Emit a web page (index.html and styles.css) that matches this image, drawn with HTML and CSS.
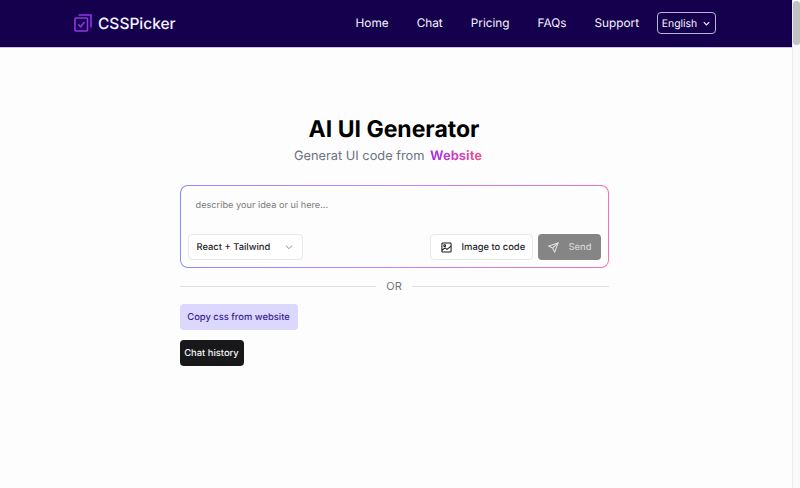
FILE: index.html
```html
<!DOCTYPE html>
<html>
  <head>
    <title>CSSPicker</title>
    <link rel="stylesheet" href="styles.css">
  </head>
  <body>
    <div class="page">
      <header class="navbar">
        <a class="logo">
          <svg class="logo-icon" viewBox="0 0 18 18" fill="none" xmlns="http://www.w3.org/2000/svg">
            <path d="M4.5 1H17V13.5" />
            <rect x="1" y="4" width="12.5" height="13" rx="1" />
            <path d="M4.2 10.2L6.6 12.8L10.6 8" />
          </svg>
          <span>CSSPicker</span>
        </a>
        <nav class="nav-links">
          <a>Home</a>
          <a>Chat</a>
          <a>Pricing</a>
          <a>FAQs</a>
          <a>Support</a>
        </nav>
        <button class="lang-button">
          English
          <svg class="lang-chevron" viewBox="0 0 10 10" fill="none" xmlns="http://www.w3.org/2000/svg">
            <path d="M2 3.5L5 6.5L8 3.5" />
          </svg>
        </button>
      </header>

      <main class="content">
        <h1>AI UI Generator</h1>
        <p class="subtitle">Generat UI code from <span class="gradient-text">Website</span></p>

        <div class="prompt-border">
          <div class="prompt-box">
            <div class="placeholder">describe your idea or ui here...</div>
            <div class="prompt-actions">
              <div class="select">
                <span>React + Tailwind</span>
                <svg class="select-chevron" viewBox="0 0 12 12" fill="none" xmlns="http://www.w3.org/2000/svg">
                  <path d="M2.5 4.5L6 8L9.5 4.5" />
                </svg>
              </div>
              <div class="action-group">
                <button class="image-button">
                  <svg class="button-icon" viewBox="0 0 12 12" fill="none" xmlns="http://www.w3.org/2000/svg">
                    <rect x="1" y="1" width="10" height="10" rx="1" />
                    <circle cx="4" cy="4" r="1" />
                    <path d="M1 9L4.5 6.5L6.5 8L11 4.5" />
                  </svg>
                  Image to code
                </button>
                <button class="send-button">
                  <svg class="button-icon" viewBox="0 0 12 12" fill="none" xmlns="http://www.w3.org/2000/svg">
                    <path d="M11 1L0.8 4.4L5 6.6L7.4 11L11 1Z" />
                    <path d="M11 1L5 6.6" />
                  </svg>
                  Send
                </button>
              </div>
            </div>
          </div>
        </div>

        <div class="divider">
          <span class="divider-line"></span>
          <span>OR</span>
          <span class="divider-line"></span>
        </div>

        <div class="extra-links">
          <button class="copy-button">Copy css from website</button>
          <button class="history-button">Chat history</button>
        </div>
      </main>
    </div>
    <div class="scrollbar"><div class="scrollbar-thumb"></div></div>
  </body>
</html>
```

FILE: styles.css
```css
html,
body {
  height: 100%;
  overflow: hidden;
}
body {
  margin: 0;
  display: flex;
  font-family: Inter, "Noto Sans", sans-serif;
  text-rendering: geometricPrecision;
  background-color: #fdfdfd;
  color: #000000;
}
button {
  font-family: inherit;
  text-rendering: geometricPrecision;
  cursor: pointer;
  white-space: nowrap;
}
.page {
  flex: 1;
  min-width: 0;
}
.scrollbar {
  width: 8px;
  background-color: #fafafa;
  border-left: 1px solid #ececec;
  box-sizing: border-box;
}
.scrollbar-thumb {
  height: 44px;
  margin: 1px 0 0 0;
  border-radius: 4px;
  background-color: #c2c2c2;
}
.navbar {
  height: 48px;
  box-sizing: border-box;
  display: flex;
  align-items: center;
  padding: 0 76px 1px 74px;
  background-color: #15004d;
  border-bottom: 1px solid #c9c3e6;
  color: #f5f3ff;
}
.logo {
  display: flex;
  align-items: center;
  gap: 6px;
  font-size: 15.5px;
  font-weight: 500;
}
.logo-icon {
  width: 18px;
  height: 18px;
  stroke: #9333ea;
  stroke-width: 1.6;
}
.nav-links {
  display: flex;
  gap: 28px;
  margin-left: auto;
  font-size: 11.8px;
}
.lang-button {
  display: flex;
  align-items: center;
  justify-content: center;
  gap: 5px;
  width: 59px;
  height: 22px;
  margin-left: 18px;
  padding: 0;
  font-size: 10.4px;
  color: #f5f3ff;
  background: none;
  border: 1px solid #b9b3d6;
  border-radius: 4px;
}
.lang-chevron {
  width: 9px;
  height: 9px;
  stroke: #f5f3ff;
  stroke-width: 1.3;
}
.content {
  width: 429px;
  margin: 0 auto;
  padding-top: 67px;
  transform: translateX(-2px);
}
h1 {
  margin: 0;
  font-size: 23px;
  font-weight: 700;
  line-height: 29px;
  text-align: center;
}
.subtitle {
  margin: 1px 0 0;
  padding-right: 12px;
  font-size: 12.8px;
  line-height: 22px;
  text-align: center;
  color: #6b7280;
}
.gradient-text {
  margin-left: 2px;
  font-size: 13px;
  font-weight: 700;
  background: linear-gradient(90deg, #a32fe6, #f0528f);
  -webkit-background-clip: text;
  background-clip: text;
  color: transparent;
}
.prompt-border {
  margin-top: 17px;
  padding: 1px;
  border-radius: 8px;
  background: linear-gradient(90deg, #8b8cf8, #c084fc 50%, #f472b6);
}
.prompt-box {
  height: 81px;
  padding: 13px 7px 7px;
  display: flex;
  flex-direction: column;
  justify-content: space-between;
  box-sizing: border-box;
  border-radius: 7px;
  background-color: #fdfdfd;
}
.placeholder {
  padding-left: 8px;
  font-size: 9.2px;
  line-height: 14px;
  color: #7b7b7b;
}
.prompt-actions {
  display: flex;
  align-items: center;
  justify-content: space-between;
}
.select {
  width: 115px;
  height: 26px;
  padding: 0 8px;
  display: flex;
  align-items: center;
  justify-content: space-between;
  box-sizing: border-box;
  font-size: 9.4px;
  font-weight: 500;
  color: #27272a;
  background-color: #ffffff;
  border: 1px solid #e8e8ea;
  border-radius: 4px;
}
.select-chevron {
  width: 10px;
  height: 10px;
  stroke: #71717a;
  stroke-width: 1;
}
.action-group {
  display: flex;
  gap: 5px;
}
.image-button,
.send-button {
  height: 26px;
  display: flex;
  align-items: center;
  box-sizing: border-box;
  font-size: 9.4px;
  font-weight: 500;
  border-radius: 4px;
}
.image-button {
  width: 103px;
  gap: 10px;
  padding: 0 10px;
  color: #27272a;
  background-color: #ffffff;
  border: 1px solid #e8e8ea;
}
.send-button {
  width: 63px;
  gap: 10px;
  padding: 0 10px;
  color: #d4d4d4;
  background-color: #858585;
  border: none;
}
.button-icon {
  width: 11px;
  height: 11px;
  flex-shrink: 0;
  stroke: #18181b;
  stroke-width: 1.1;
}
.send-button .button-icon {
  stroke: #e5e5e5;
}
.divider {
  margin-top: 11px;
  display: flex;
  align-items: center;
  gap: 10px;
  font-size: 11px;
  line-height: 14px;
  color: #71717a;
}
.divider-line {
  flex: 1;
  height: 1px;
  background-color: #dfdfe1;
}
.extra-links {
  margin-top: 11px;
  display: flex;
  flex-direction: column;
  align-items: flex-start;
  gap: 10px;
}
.copy-button {
  width: 118px;
  height: 26px;
  padding: 0;
  font-size: 9.4px;
  font-weight: 500;
  color: #3b1d8f;
  background-color: #dcd8fd;
  border: none;
  border-radius: 4px;
}
.history-button {
  width: 64px;
  height: 26px;
  padding: 0;
  font-size: 9.4px;
  font-weight: 500;
  color: #f5f5f5;
  background-color: #18181b;
  border: none;
  border-radius: 4px;
}
```
